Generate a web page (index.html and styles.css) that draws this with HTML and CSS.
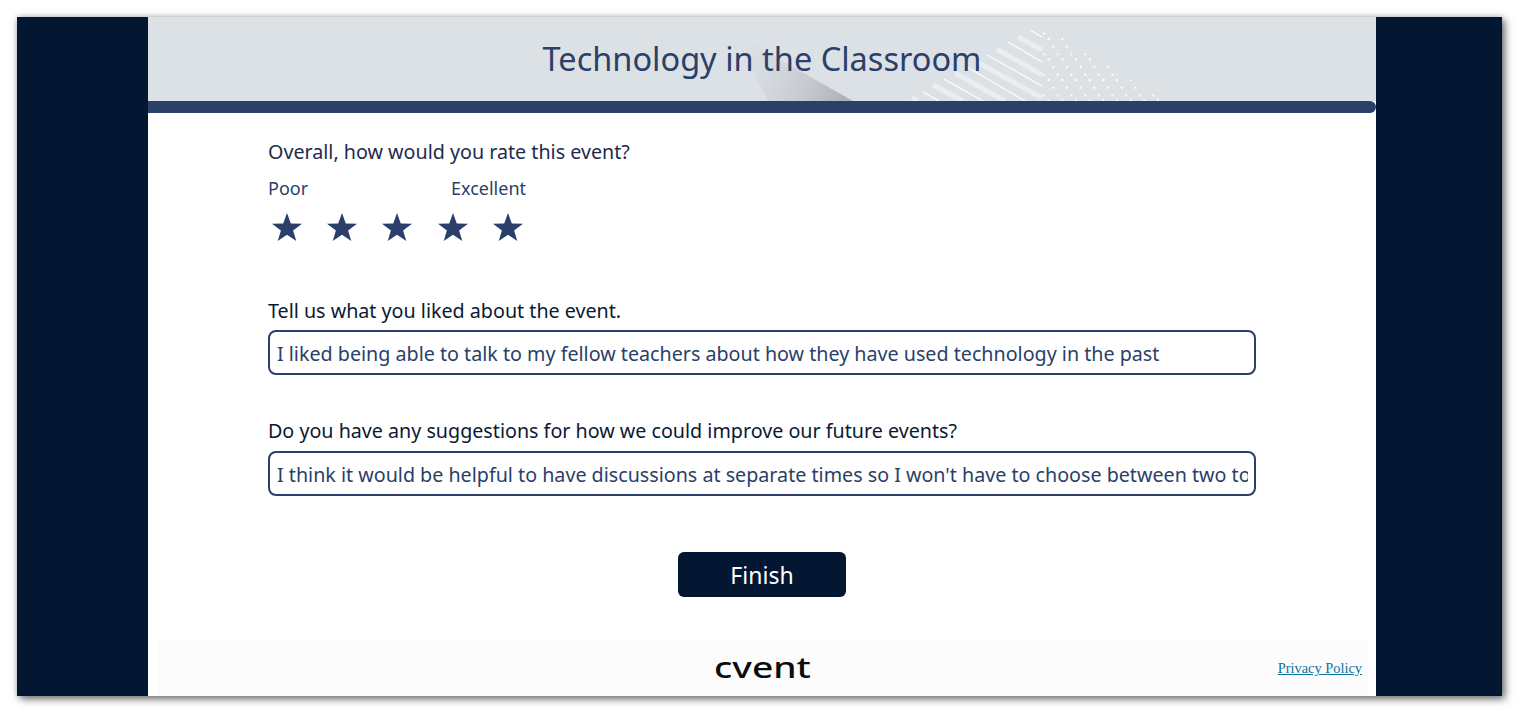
FILE: index.html
```html
<!DOCTYPE html>
<html lang="en">
<head>
<meta charset="utf-8">
<title>Technology in the Classroom</title>
<link rel="stylesheet" href="styles.css">
</head>
<body>
<div class="window">
  <div class="side side-left"></div>
  <main class="main">
    <header class="header">
      <svg class="header-art" viewBox="148 17 1228 84" aria-hidden="true">
        <defs>
          <linearGradient id="fold" gradientUnits="userSpaceOnUse" x1="845" y1="95" x2="722" y2="45">
            <stop offset="0" stop-color="#a9adb2" stop-opacity=".9"/>
            <stop offset="1" stop-color="#dce1e5" stop-opacity="0"/>
          </linearGradient>
          <pattern id="dots" patternUnits="userSpaceOnUse" x="1048.7" y="39" width="13.67" height="20.5">
            <circle cx="0" cy="0" r="1.15" fill="#fff"/>
            <circle cx="13.67" cy="0" r="1.15" fill="#fff"/>
            <circle cx="0" cy="20.5" r="1.15" fill="#fff"/>
            <circle cx="13.67" cy="20.5" r="1.15" fill="#fff"/>
            <circle cx="4.56" cy="7.6" r="1.15" fill="#fff"/>
            <circle cx="9.11" cy="15.2" r="1.15" fill="#fff"/>
          </pattern>
        </defs>
        <polygon points="733,33 853,101 768,101" fill="url(#fold)"/>
        <g stroke="#fff" stroke-opacity=".42" stroke-width="5">
          <line x1="1018" y1="37" x2="1042" y2="50"/>
          <line x1="997" y1="49" x2="1042" y2="75"/>
          <line x1="977" y1="62" x2="1042" y2="98"/>
          <line x1="955" y1="73" x2="1005" y2="101"/>
          <line x1="933" y1="85" x2="963" y2="101"/>
          <line x1="912" y1="98" x2="918" y2="101"/>
        </g>
        <g stroke="#fff" stroke-width="1.1">
          <line x1="1030" y1="30" x2="1042" y2="37"/>
          <line x1="1008" y1="42" x2="1042" y2="62"/>
          <line x1="987" y1="55" x2="1042" y2="86"/>
          <line x1="967" y1="67" x2="1025" y2="101"/>
          <line x1="944" y1="79" x2="983" y2="101"/>
          <line x1="923" y1="92" x2="939" y2="101"/>
        </g>
        <polygon points="1036,21 1160,98 1160,101 1042,101 1042,21" fill="url(#dots)"/>
      </svg>
      <h1 class="title">Technology in the Classroom</h1>
    </header>
    <div class="bar"></div>
    <form class="form">
      <section class="question q-rating">
        <div class="label label-soft">Overall, how would you rate this event?</div>
        <div class="scale"><span class="scale-low">Poor</span><span>Excellent</span></div>
        <div class="stars">
          <svg class="star" viewBox="0 0 30 28"><polygon points="15,0 18.8,10.5 30,10.7 21.1,17.5 24.3,28 15,21.8 5.7,28 8.9,17.5 0,10.7 11.2,10.5"/></svg>
          <svg class="star" viewBox="0 0 30 28"><polygon points="15,0 18.8,10.5 30,10.7 21.1,17.5 24.3,28 15,21.8 5.7,28 8.9,17.5 0,10.7 11.2,10.5"/></svg>
          <svg class="star" viewBox="0 0 30 28"><polygon points="15,0 18.8,10.5 30,10.7 21.1,17.5 24.3,28 15,21.8 5.7,28 8.9,17.5 0,10.7 11.2,10.5"/></svg>
          <svg class="star" viewBox="0 0 30 28"><polygon points="15,0 18.8,10.5 30,10.7 21.1,17.5 24.3,28 15,21.8 5.7,28 8.9,17.5 0,10.7 11.2,10.5"/></svg>
          <svg class="star" viewBox="0 0 30 28"><polygon points="15,0 18.8,10.5 30,10.7 21.1,17.5 24.3,28 15,21.8 5.7,28 8.9,17.5 0,10.7 11.2,10.5"/></svg>
        </div>
      </section>
      <section class="question q-liked">
        <label class="label" for="liked">Tell us what you liked about the event.</label>
        <input class="answer" id="liked" type="text" value="I liked being able to talk to my fellow teachers about how they have used technology in the past">
      </section>
      <section class="question q-improve">
        <label class="label" for="improve">Do you have any suggestions for how we could improve our future events?</label>
        <input class="answer" id="improve" type="text" value="I think it would be helpful to have discussions at separate times so I won't have to choose between two topics">
      </section>
      <div class="actions"><button class="finish" type="button">Finish</button></div>
    </form>
    <footer class="footer">
      <span class="logo-slot"><span class="logo">cvent</span></span>
      <a class="privacy" href="#">Privacy Policy</a>
    </footer>
  </main>
  <div class="side side-right"></div>
</div>
</body>
</html>
```
FILE: styles.css
```css
* { box-sizing: border-box; }
html, body { margin: 0; height: 100%; background: #fff; overflow: hidden; }
body { padding: 17px 25px 25px 17px; font-family: "Noto Sans", sans-serif; }
.window {
  display: flex;
  width: 1485px;
  height: 679px;
  box-shadow: 3px 3px 8px rgba(0,0,0,.55), 0 0 6px rgba(0,0,0,.18);
}
.side { background: #031632; }
.side-left { width: 131px; }
.side-right { width: 126px; }
.main { width: 1228px; background: #fff; display: flex; flex-direction: column; }
.header {
  position: relative;
  height: 84px;
  background: #dce1e5;
  display: flex;
  align-items: center;
  justify-content: center;
  overflow: hidden;
}
.header-art { position: absolute; left: 0; top: 0; width: 1228px; height: 84px; }
.title {
  position: relative;
  margin: 0;
  font-weight: 400;
  font-size: 32.5px;
  line-height: 84px;
  color: #2a3f69;
}
.bar { height: 12px; background: #2a3f69; border-radius: 0 6px 6px 0; }
.form { flex: 1; padding: 0 120px; display: flex; flex-direction: column; }
.question { display: flex; flex-direction: column; }
.q-rating { padding-top: 26px; }
.q-liked { padding-top: 57px; }
.q-improve { padding-top: 43px; }
.q-improve .answer { margin-top: 7px; }
.label { font-size: 19.7px; line-height: 26px; color: #0b1a33; }
.label-soft { color: #1d2c4c; }
.scale {
  display: flex;
  margin-top: 11px;
  font-size: 18px;
  line-height: 24px;
  color: #2a3f69;
}
.scale-low { width: 183px; }
.stars { display: flex; gap: 25.2px; margin: 13px 0 0 4px; }
.star { width: 30px; height: 28px; fill: #2a3f69; display: block; }
.answer {
  width: 988px;
  height: 45px;
  margin-top: 6px;
  padding: 1px 6px 0 7px;
  border: 2px solid #2a3f69;
  border-radius: 8px;
  background: #fff;
  outline: 0;
  font: 400 19.7px "Noto Sans", sans-serif;
  color: #2a3f69;
}
.actions { display: flex; justify-content: center; padding-top: 56px; }
.finish {
  width: 168px;
  height: 45px;
  border: 0;
  border-radius: 6px;
  background: #031632;
  color: #fff;
  font: 400 23px "Noto Sans", sans-serif;
}
.footer {
  position: relative;
  height: 56px;
  margin: 0 8px 0 10px;
  background: #fcfcfc;
  display: flex;
  align-items: center;
  justify-content: center;
}
.logo-slot { width: 96px; display: flex; justify-content: center; margin-right: 2px; }
.logo {
  font: 500 28px "Noto Sans", sans-serif;
  line-height: 28px;
  color: #0c0c0c;
  transform: scaleX(1.33);
  margin-top: -3px;
}
.privacy {
  position: absolute;
  right: 6px;
  top: 20px;
  font: 14.4px "Liberation Serif", serif;
  line-height: 16px;
  color: #0a74a0;
}
```
